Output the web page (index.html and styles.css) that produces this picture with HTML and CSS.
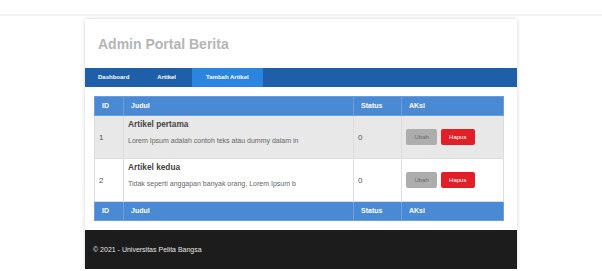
FILE: index.html
```html
<!DOCTYPE html>
<html>
  <head lang="id">
    <meta charset="utf-8"/>
    <title>Admin Portal Berita</title>
    <link rel="stylesheet" href="styles.css">
  </head>
  <body>
    <div class="topbar"></div>

    <div class="container">
      <header>
        <h1>Admin Portal Berita</h1>
      </header>

      <nav>
        <a href="#">Dashboard</a>
        <a href="#">Artikel</a>
        <a href="#" class="active">Tambah Artikel</a>
      </nav>

      <div class="content">
        <table>
          <thead>
            <tr>
              <th class="colId">ID</th>
              <th class="colJudul">Judul</th>
              <th class="colStatus">Status</th>
              <th class="colAksi">AKsi</th>
            </tr>
          </thead>
          <tbody>
            <tr class="odd">
              <td>1</td>
              <td>
                <h3>Artikel pertama</h3>
                <p>Lorem Ipsum adalah contoh teks atau dummy dalam in</p>
              </td>
              <td>0</td>
              <td>
                <a href="#" class="btn btnUbah">Ubah</a>
                <a href="#" class="btn btnHapus">Hapus</a>
              </td>
            </tr>
            <tr>
              <td>2</td>
              <td>
                <h3>Artikel kedua</h3>
                <p>Tidak seperti anggapan banyak orang, Lorem Ipsum b</p>
              </td>
              <td>0</td>
              <td>
                <a href="#" class="btn btnUbah">Ubah</a>
                <a href="#" class="btn btnHapus">Hapus</a>
              </td>
            </tr>
          </tbody>
          <tfoot>
            <tr>
              <th>ID</th>
              <th>Judul</th>
              <th>Status</th>
              <th>AKsi</th>
            </tr>
          </tfoot>
        </table>
      </div>

      <footer>
        <p>&copy; 2021 - Universitas Pelita Bangsa</p>
      </footer>
    </div>
  </body>
</html>
```

FILE: styles.css
```css
body {
  margin: 0;
  background-color: #ffffff;
  font-family: "Liberation Sans", Arial, sans-serif;
}

.topbar {
  height: 14px;
  border-bottom: 2px solid #f3f3f3;
}

.container {
  width: 432px;
  margin: 3px auto 0 auto;
  background-color: #ffffff;
  box-shadow: 0 0 4px rgba(0, 0, 0, 0.18);
}

header {
  padding: 17px 13px 16px 13px;
}

header h1 {
  margin: 0;
  font-size: 14px;
  line-height: 16px;
  font-weight: bold;
  color: #b5b5b5;
}

nav {
  display: flex;
  height: 19px;
  background-color: #1f5fa9;
}

nav a {
  display: block;
  padding: 0 14px;
  line-height: 19px;
  font-size: 6px;
  font-weight: bold;
  color: #ffffff;
  text-decoration: none;
}

nav a:first-child {
  padding-left: 13px;
}

nav a.active {
  margin-left: 2px;
  background-color: #2b84e0;
}

.content {
  padding: 9px 13px 9px 9px;
}

table {
  width: 100%;
  border-collapse: collapse;
  border: 1px solid #dddddd;
}

th {
  background-color: #4a89d4;
  color: #ffffff;
  font-size: 7px;
  font-weight: bold;
  text-align: left;
  padding: 5px 7px;
  line-height: 8px;
  border: 1px solid #6b9fdd;
}

.colId {
  width: 14px;
}

.colStatus {
  width: 33px;
}

.colAksi {
  width: 87px;
}

td {
  padding: 4px;
  font-size: 8px;
  line-height: 9px;
  color: #555555;
  vertical-align: middle;
  border: 1px solid #dddddd;
}

tr.odd td {
  background-color: #e8e8e8;
}

td h3 {
  margin: 0 0 7px 0;
  font-size: 8.3px;
  line-height: 9px;
  font-weight: bold;
  color: #444444;
}

td p {
  margin: 0 0 9px 0;
  font-size: 7px;
  line-height: 9px;
  color: #666666;
}

.btn {
  display: inline-block;
  height: 16px;
  line-height: 16px;
  padding: 0 8.5px;
  font-size: 6px;
  border-radius: 2px;
  text-decoration: none;
  vertical-align: middle;
}

.btnUbah {
  background-color: #adadad;
  color: #6a6a6a;
}

.btnHapus {
  margin-left: 1px;
  background-color: #e21f27;
  color: #ffffff;
}

footer {
  height: 39px;
  padding: 0 8px;
  background-color: #1c1c1c;
  display: flex;
  align-items: center;
}

footer p {
  margin: 0;
  font-size: 7px;
  color: #e6e6e6;
}
```
